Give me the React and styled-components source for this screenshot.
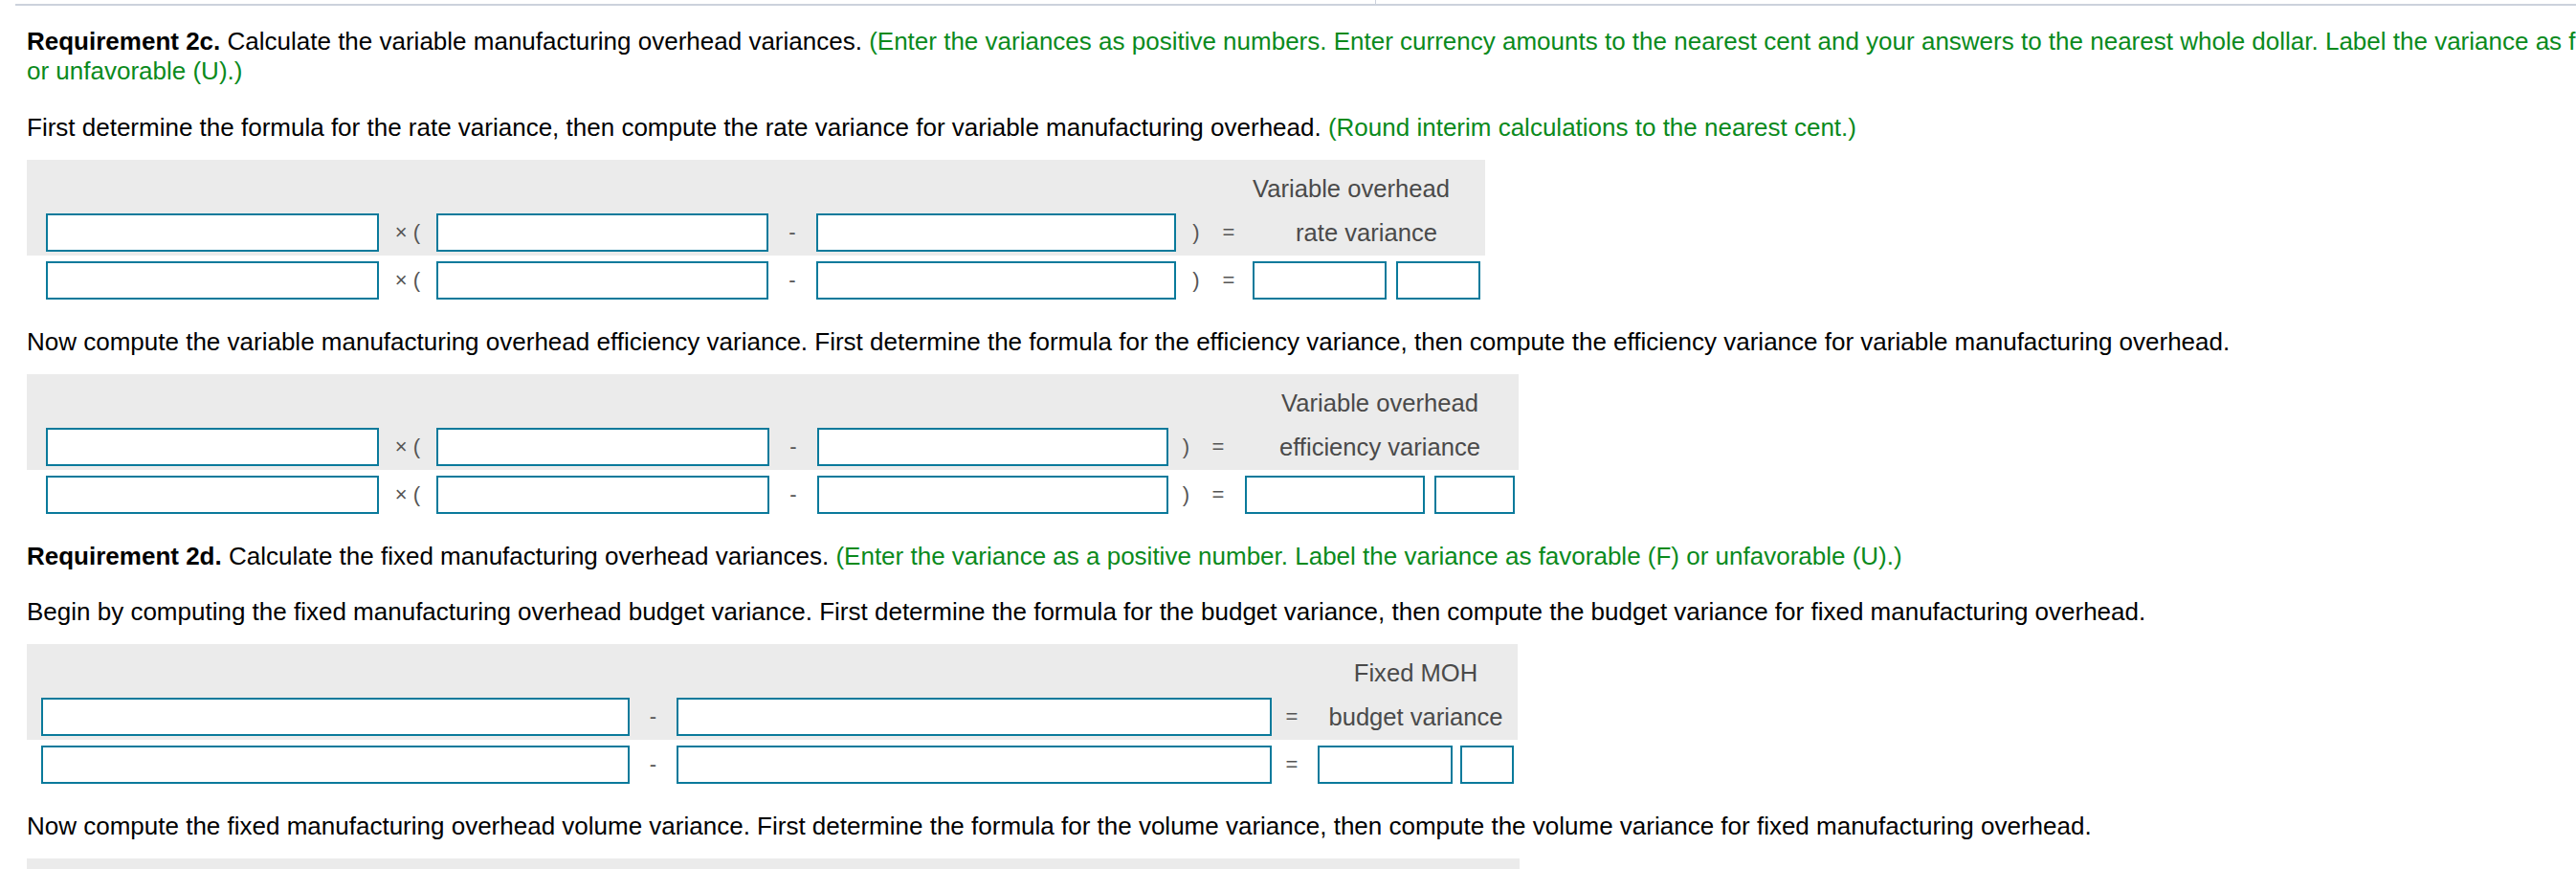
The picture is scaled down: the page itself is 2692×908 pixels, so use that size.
import React from 'react';
import styled, { createGlobalStyle } from 'styled-components';

const GlobalStyle = createGlobalStyle`
    html, body {
        margin: 0;
        padding: 0;
        background: #fff;
        overflow: hidden;
    }
    body {
        font-family: "Liberation Sans", Arial, Helvetica, sans-serif;
        font-size: 26px;
        color: #000;
    }
`;

const Page = styled.div`
    height: 100vh;
    overflow: hidden;
`;

// thin rule across the top with the little tick where the tabs split
const TopRule = styled.div`
    position: relative;
    height: 2px;
    margin: 4px 0 0 16px;
    background: #ccd2dc;
    &::after {
        content: '';
        position: absolute;
        left: 1421px;
        top: -4px;
        width: 1px;
        height: 4px;
        background: #ccd2dc;
    }
`;

const Content = styled.div`
    padding-left: 28px;
`;

const Paragraph = styled.p`
    margin: ${p => p.$top}px 0 0 0;
    line-height: 31px;
    white-space: ${p => (p.$nowrap ? 'nowrap' : 'normal')};
`;

const Strong = styled.b`
    font-weight: bold;
`;

const Hint = styled.span`
    color: #0a8a1c;
`;

const Panel = styled.div`
    margin-top: 18px;
    width: ${p => p.$width}px;
    font-size: 25.6px;
`;

const Shade = styled.div`
    background: #ebebeb;
    padding: 0 0 4px ${p => p.$padLeft}px;
`;

const HeaderRow = styled.div`
    display: grid;
    grid-template-columns: ${p => p.$cols};
    height: 56px;
    align-items: end;
`;

const Row = styled.div`
    display: grid;
    grid-template-columns: ${p => p.$cols};
    height: 40px;
    align-items: center;
`;

const AnswerRow = styled(Row)`
    margin-top: 6px;
    padding-left: ${p => p.$padLeft}px;
`;

const HeadLabel = styled.div`
    grid-column: -2 / -1;
    line-height: 30px;
    margin-bottom: 11px;
    text-align: center;
    white-space: nowrap;
    color: #4a4a4a;
    transform: translateX(${p => p.$shift || 0}px);
`;

const RowLabel = styled.div`
    grid-column: -2 / -1;
    line-height: 40px;
    text-align: center;
    white-space: nowrap;
    color: #4a4a4a;
`;

const Symbol = styled.div`
    font-size: 22px;
    line-height: 40px;
    text-align: center;
    color: #555;
    white-space: pre;
`;

const Field = styled.input`
    box-sizing: border-box;
    width: 100%;
    height: 40px;
    margin: 0;
    padding: 0 6px;
    border: 2px solid #0a7a9b;
    border-radius: 0;
    background: #fff;
    font: inherit;
    outline: none;
`;

const AnswerCell = styled.div`
    grid-column: -2 / -1;
    display: flex;
    gap: ${p => p.$gap}px;
`;

const AnswerBox = styled(Field)`
    width: ${p => p.$w}px;
`;

// 'F' is an input box, any other string a symbol, null an empty spacer column
function FormulaCells({ items }) {
    return items.map((item, i) => {
        if (item === 'F') return <Field key={i} type="text" />;
        if (item === null) return <span key={i} />;
        return <Symbol key={i}>{item}</Symbol>;
    });
}

function VariancePanel({ layout }) {
    const cols = layout.cols.map(c => `${c}px`).join(' ');
    return (
        <Panel $width={layout.width}>
            <Shade $padLeft={layout.padLeft}>
                <HeaderRow $cols={cols}>
                    <HeadLabel $shift={layout.shift}>{layout.title}</HeadLabel>
                </HeaderRow>
                <Row $cols={cols}>
                    <FormulaCells items={layout.items} />
                    <RowLabel>{layout.subtitle}</RowLabel>
                </Row>
            </Shade>
            <AnswerRow $cols={cols} $padLeft={layout.padLeft}>
                <FormulaCells items={layout.items} />
                <AnswerCell $gap={layout.answerGap}>
                    <AnswerBox type="text" $w={layout.answer[0]} />
                    <AnswerBox type="text" $w={layout.answer[1]} />
                </AnswerCell>
            </AnswerRow>
        </Panel>
    );
}

// column widths read off the reference, one entry per grid column
const ratePanel = {
    width: 1524,
    padLeft: 20,
    cols: [348, 60, 347, 50, 376, 42, 26, 12, 238],
    items: ['F', '\u00d7 (', 'F', '-', 'F', ')', '=', null],
    answer: [140, 88],
    answerGap: 10,
    title: 'Variable overhead',
    subtitle: 'rate variance',
    shift: -16,
};

const efficiencyPanel = {
    width: 1559,
    padLeft: 20,
    cols: [348, 60, 348, 50, 367, 37, 30, 13, 282],
    items: ['F', '\u00d7 (', 'F', '-', 'F', ')', '=', null],
    answer: [188, 84],
    answerGap: 10,
    title: 'Variable overhead',
    subtitle: 'efficiency variance',
};

const budgetPanel = {
    width: 1558,
    padLeft: 15,
    cols: [615, 49, 622, 42, 6, 205],
    items: ['F', '-', 'F', '=', null],
    answer: [141, 56],
    answerGap: 8,
    title: 'Fixed MOH',
    subtitle: 'budget variance',
};

const volumePanel = {
    width: 1560,
    padLeft: 15,
    cols: [615, 49, 622, 42, 6, 207],
    items: ['F', '-', 'F', '=', null],
    answer: [143, 56],
    answerGap: 8,
    title: 'Fixed MOH',
    subtitle: 'volume variance',
};

export default function App() {
    return (
        <Page>
            <GlobalStyle />
            <TopRule />
            <Content>
                <Paragraph $top={22} $nowrap>
                    <Strong>Requirement 2c.</Strong> Calculate the variable manufacturing overhead variances.{' '}
                    <Hint>
                        (Enter the variances as positive numbers. Enter currency amounts to the nearest cent and your
                        answers to the nearest whole dollar. Label the variance as favorable (F)
                        <br />
                        or unfavorable (U).)
                    </Hint>
                </Paragraph>
                <Paragraph $top={28}>
                    First determine the formula for the rate variance, then compute the rate variance for variable
                    manufacturing overhead. <Hint>(Round interim calculations to the nearest cent.)</Hint>
                </Paragraph>
                <VariancePanel layout={ratePanel} />

                <Paragraph $top={29}>
                    Now compute the variable manufacturing overhead efficiency variance. First determine the formula for
                    the efficiency variance, then compute the efficiency variance for variable manufacturing overhead.
                </Paragraph>
                <VariancePanel layout={efficiencyPanel} />

                <Paragraph $top={29}>
                    <Strong>Requirement 2d.</Strong> Calculate the fixed manufacturing overhead variances.{' '}
                    <Hint>
                        (Enter the variance as a positive number. Label the variance as favorable (F) or unfavorable
                        (U).)
                    </Hint>
                </Paragraph>
                <Paragraph $top={27}>
                    Begin by computing the fixed manufacturing overhead budget variance. First determine the formula for
                    the budget variance, then compute the budget variance for fixed manufacturing overhead.
                </Paragraph>
                <VariancePanel layout={budgetPanel} />

                <Paragraph $top={29}>
                    Now compute the fixed manufacturing overhead volume variance. First determine the formula for the
                    volume variance, then compute the volume variance for fixed manufacturing overhead.
                </Paragraph>
                <VariancePanel layout={volumePanel} />
            </Content>
        </Page>
    );
}
